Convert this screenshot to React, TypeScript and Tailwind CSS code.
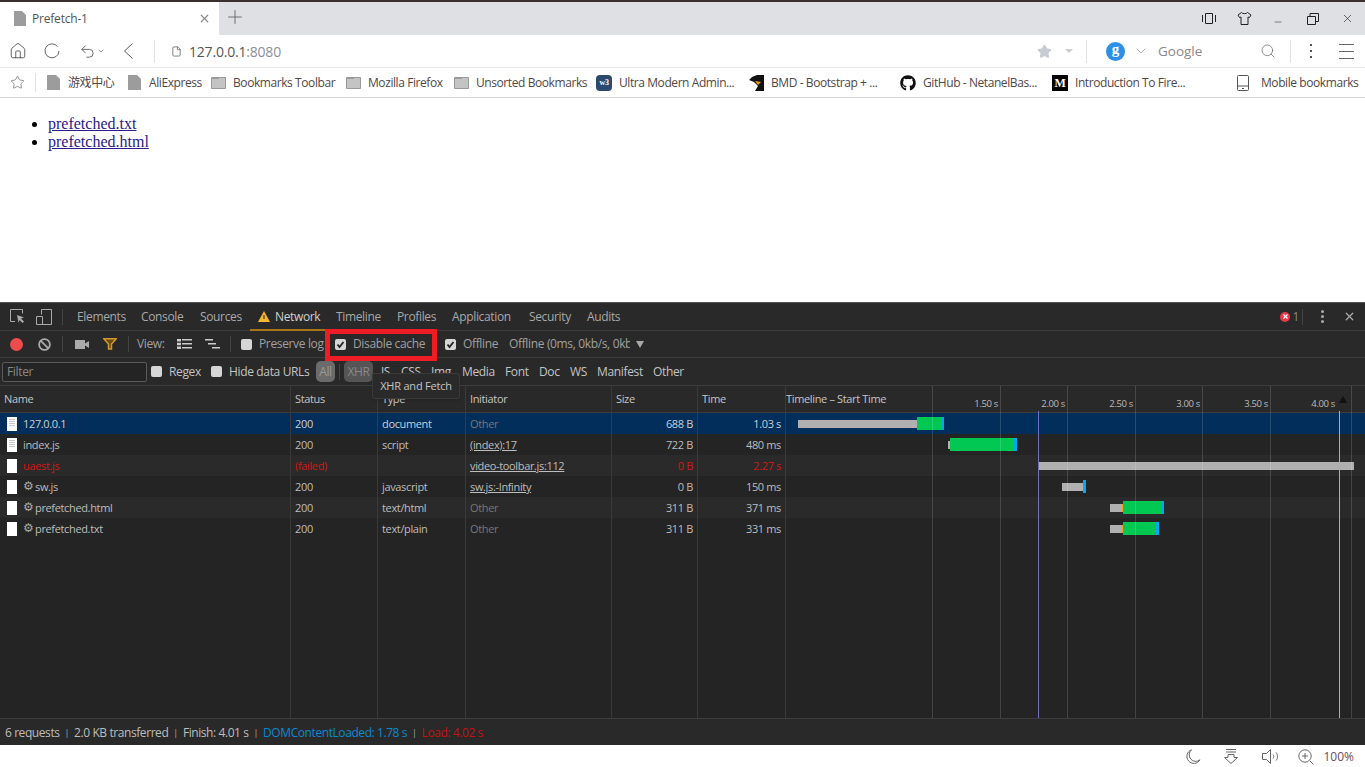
import { ChevronDown, File, Home, Minus, Plus, Search, Star, Undo2, X } from "lucide-react";
import { FaGithub } from "react-icons/fa";

const ui = "font-['Open_Sans','Noto_Sans',sans-serif]";

type Bookmark = { label: string; icon: "doc" | "folder" | "w3" | "bmd" | "gh" | "m"; w: string; tw: string };

const bookmarks: Bookmark[] = [
  { label: "游戏中心", icon: "doc", w: "w-[81px]", tw: "w-[60px]" },
  { label: "AliExpress", icon: "doc", w: "w-[83px]", tw: "w-[62px]" },
  { label: "Bookmarks Toolbar", icon: "folder", w: "w-[135px]", tw: "w-[113px]" },
  { label: "Mozilla Firefox", icon: "folder", w: "w-[108px]", tw: "w-[86px]" },
  { label: "Unsorted Bookmarks", icon: "folder", w: "w-[142px]", tw: "w-[120px]" },
  { label: "Ultra Modern Admin...", icon: "w3", w: "w-[152px]", tw: "w-[129px]" },
  { label: "BMD - Bootstrap + ...", icon: "bmd", w: "w-[152px]", tw: "w-[129px]" },
  { label: "GitHub - NetanelBas...", icon: "gh", w: "w-[152px]", tw: "w-[129px]" },
  { label: "Introduction To Fire...", icon: "m", w: "w-[185px]", tw: "w-[129px]" },
];

function BookmarkIcon({ icon }: { icon: Bookmark["icon"] }) {
  if (icon === "doc")
    return (
      <svg className="mr-px" width="13" height="15" viewBox="0 0 13 15">
        <path d="M0 0h9l4 4v11H0z" fill="#9c9c9c" />
      </svg>
    );
  if (icon === "folder")
    return (
      <svg width="15" height="13" viewBox="0 0 15 13">
        <path d="M.5 1.5h14v11H.5z" fill="#c4c4c4" stroke="#9a9a9a" />
        <path d="M1 1h7v2H1z" fill="#9a9a9a" />
      </svg>
    );
  if (icon === "w3")
    return <div className="w-4 h-4 bg-[#2c4a6e] rounded-sm flex items-center justify-center text-white text-[8px] font-bold font-['Liberation_Serif',serif]">w3</div>;
  if (icon === "bmd")
    return (
      <svg width="16" height="16" viewBox="0 0 16 16">
        <path d="M9 0h7v16H7l3-5-4-4-5-2 3-3z" fill="#111" />
        <path d="M7 6l6 1-3 3z" fill="#f59e0b" />
      </svg>
    );
  if (icon === "gh") return <FaGithub size={16} color="#111" />;
  return <div className="w-4 h-4 bg-black text-white text-[12px] leading-4 text-center font-bold font-['Liberation_Serif',serif]">M</div>;
}

function BrowserChrome() {
  return (
    <>
      <div className="h-[2px] bg-[#3a3030] shrink-0" />
      <div className={`h-[33px] bg-[#dfe0e4] flex shrink-0 ${ui}`}>
        <div className="w-[219px] bg-white flex items-center pl-[14px] pr-[8px]">
          <svg width="12" height="15" viewBox="0 0 12 15">
            <path d="M0 0h8l4 4v11H0z" fill="#9c9c9c" />
          </svg>
          <span className="ml-[6px] text-[12px] tracking-[-0.2px] text-[#555] flex-1">Prefetch-1</span>
          <X size={13} color="#8c8c8c" strokeWidth={2.2} />
        </div>
        <div className="ml-[5px] mb-[3px] flex items-center">
          <Plus size={22} color="#666" strokeWidth={1} />
        </div>
        <div className="ml-auto flex items-center w-[165px] text-[#222]">
          <svg className="ml-[2px]" width="14" height="13" viewBox="0 0 14 13" fill="none" stroke="#222">
            <path d="M3.5 1.5h7v10h-7zM.5 3v7M13.5 3v7" />
          </svg>
          <svg className="ml-[21px]" width="15" height="13" viewBox="0 0 15 13" fill="none" stroke="#222">
            <path d="M4.5.5L1 3l1.500 2.500 1.500-.5v7.500h7V5l1.500.5L14 3 10.500.5c-.5 1.500-5.500 1.500-6 0z" />
          </svg>
          <Minus className="ml-[21px] mt-[6px]" size={10} strokeWidth={1.3} />
          <svg className="ml-[24px]" width="12" height="12" viewBox="0 0 12 12" fill="none" stroke="#222">
            <path d="M.5 3.500h8v8h-8zM3 3.500v-3h8.500v8H8.500" />
          </svg>
          <X className="ml-[22px]" size={13} strokeWidth={1.2} />
        </div>
      </div>

      <div className={`h-[33px] bg-white border-b border-[#e6e6e6] flex items-center shrink-0 ${ui}`}>
        <Home className="ml-[9px]" size={18} color="#444" strokeWidth={1.1} />
        <svg className="ml-[17px]" width="16" height="16" viewBox="0 0 16 16" fill="none" stroke="#666">
          <path d="M13.500 3.500A7 7 0 1 0 15 8" />
        </svg>
        <Undo2 className="ml-[19px]" size={17} color="#444" strokeWidth={1.1} />
        <ChevronDown className="ml-[1px]" size={8} color="#555" />
        <svg className="ml-[18px]" width="11" height="16" viewBox="0 0 11 16" fill="none" stroke="#555">
          <path d="M9.500.5L1.500 8l8 7.500" />
        </svg>
        <div className="ml-[20px] w-px h-[23px] bg-[#e3e3e3]" />
        <File className="ml-[16px]" size={11} color="#777" />
        <span className="ml-[7px] text-[14px] tracking-[-0.2px] text-[#555]">
          127.0.0.1<span className="text-[#8a9096]">:8080</span>
        </span>
        <Star className="ml-[756px]" size={15} fill="#c8ccd2" color="#c8ccd2" />
        <div className="ml-[13px] w-0 h-0 border-x-[4px] border-x-transparent border-t-[4px] border-t-[#ccc]" />
        <div className="ml-[13px] w-px h-[23px] bg-[#e3e3e3]" />
        <div className="ml-[19px] w-[19px] h-[19px] rounded-full bg-[#2d8fe8] text-white text-[15px] leading-[15px] text-center font-bold font-['Liberation_Serif',serif]">g</div>
        <ChevronDown className="ml-[8px]" size={16} color="#999" strokeWidth={1.2} />
        <span className="ml-[9px] text-[13.500px] text-[#888]">Google</span>
        <Search className="ml-[58px]" size={16} color="#666" strokeWidth={1.1} />
        <div className="ml-[14px] w-px h-[23px] bg-[#e3e3e3]" />
        <div className="ml-[19px] flex flex-col gap-[4px]">
          <div className="w-[2px] h-[2px] bg-[#555]" />
          <div className="w-[2px] h-[2px] bg-[#555]" />
          <div className="w-[2px] h-[2px] bg-[#555]" />
        </div>
        <div className="ml-[27px] w-[15px] flex flex-col gap-[6px]">
          <div className="h-px bg-[#666]" />
          <div className="h-px bg-[#666]" />
          <div className="h-px bg-[#666]" />
        </div>
      </div>

      <div className={`h-[30px] bg-white border-b border-[#d2d2d2] flex items-center shrink-0 text-[12px] tracking-[-0.42px] text-[#504747] ${ui}`}>
        <Star className="ml-[10px]" size={15} color="#555" strokeWidth={1} />
        <div className="ml-[10px] mr-[11px] w-px h-[19px] bg-[#e3e3e3]" />
        {bookmarks.map((b) => (
          <div key={b.label} className={`flex items-center shrink-0 gap-[7px] ${b.w}`}>
            <div className="shrink-0 flex">
              <BookmarkIcon icon={b.icon} />
            </div>
            <span className={`whitespace-nowrap font-["Open_Sans","Noto_Sans_CJK_SC",sans-serif] ${b.tw}`}>{b.label}</span>
          </div>
        ))}
        <svg width="12" height="16" viewBox="0 0 12 16" fill="none" stroke="#555">
          <rect x=".5" y=".5" width="11" height="15" rx="1" />
          <path d="M.5 11h11M5 13.500h2" />
        </svg>
        <span className="ml-[12px] whitespace-nowrap">Mobile bookmarks</span>
      </div>
    </>
  );
}

function PageContent() {
  return (
    <div className="h-[204px] bg-white shrink-0 font-['Liberation_Serif',serif] text-[16px] leading-[18px] text-black pt-[17px]">
      <ul className="list-disc pl-[48px]">
        <li>
          <a className="underline text-[#2a1a8a]">prefetched.txt</a>
        </li>
        <li>
          <a className="underline text-[#2a1a8a]">prefetched.html</a>
        </li>
      </ul>
    </div>
  );
}

function Check({ checked, className }: { checked?: boolean; className?: string }) {
  return (
    <div className={`w-[11px] h-[11px] rounded-[2px] bg-[#d6d6d6] flex items-center justify-center shrink-0 ${className ?? ""}`}>
      {checked && (
        <svg width="9" height="9" viewBox="0 0 9 9" fill="none" stroke="#222" strokeWidth="1.800">
          <path d="M1.500 4.500L3.500 7l4-5" />
        </svg>
      )}
    </div>
  );
}

const Sep = ({ className }: { className?: string }) => <div className={`w-px h-[16px] bg-[#444] shrink-0 ${className ?? ""}`} />;

const devTabs = [
  { label: "Elements", w: "w-[64px]" },
  { label: "Console", w: "w-[59px]" },
  { label: "Sources", w: "w-[50px]" },
];
const devTabsRight = [
  { label: "Timeline", w: "w-[61px]" },
  { label: "Profiles", w: "w-[55px]" },
  { label: "Application", w: "w-[77px]" },
  { label: "Security", w: "w-[58px]" },
  { label: "Audits", w: "w-[50px]" },
];

function DevTabs() {
  return (
    <div className="h-[28px] bg-[#292929] border-b border-[#3d3d3d] flex items-center shrink-0 text-[#a8a8a8]">
      <svg className="ml-[10px]" width="15" height="15" viewBox="0 0 15 15" fill="none" stroke="#aaa">
        <path d="M5 12.500H.5V.5h12v4" />
        <path d="M7 6l7 2.500-3 1 3 3-1.500 1.500-3-3-1 3z" fill="#aaa" stroke="none" />
      </svg>
      <svg className="ml-[11px]" width="16" height="16" viewBox="0 0 16 16" fill="none" stroke="#aaa">
        <path d="M5.500 5.500v-5h10v15h-10M.5 7.500h6v8h-6z" />
      </svg>
      <Sep className="ml-[10px] mr-[14px]" />
      {devTabs.map((t) => (
        <span key={t.label} className={`shrink-0 ${t.w}`}>
          {t.label}
        </span>
      ))}
      <div className="relative h-full w-[78px] shrink-0 flex items-center pl-[8px] gap-[5px] text-[#d0d0d0]">
        <svg width="12" height="11" viewBox="0 0 12 11">
          <path d="M6 0l6 11H0z" fill="#f2b92e" />
          <path d="M5.500 4h1v4h-1z" fill="#222" />
        </svg>
        <span>Network</span>
        <div className="absolute left-0 right-0 -bottom-px h-[2px] bg-[#a8741a]" />
      </div>
      <div className="w-[8px] shrink-0" />
      {devTabsRight.map((t) => (
        <span key={t.label} className={`shrink-0 ${t.w}`}>
          {t.label}
        </span>
      ))}
      <div className="ml-auto flex items-center">
        <div className="w-[10px] h-[10px] rounded-full bg-[#e8394a] flex items-center justify-center">
          <X size={7} color="#fff" strokeWidth={4} />
        </div>
        <span className="ml-[2px] text-[#888]">1</span>
        <div className="ml-[3px] w-px h-[16px] bg-[#444]" />
        <div className="ml-[18px] flex flex-col gap-[2px]">
          <div className="w-[3px] h-[3px] rounded-full bg-[#aaa]" />
          <div className="w-[3px] h-[3px] rounded-full bg-[#aaa]" />
          <div className="w-[3px] h-[3px] rounded-full bg-[#aaa]" />
        </div>
        <X className="ml-[19px] mr-[9px]" size={13} color="#aaa" strokeWidth={2.4} />
      </div>
    </div>
  );
}

function NetToolbar() {
  return (
    <div className="h-[27px] bg-[#292929] border-b border-[#3d3d3d] flex items-center shrink-0 text-[#a0a0a0]">
      <div className="ml-[10px] w-[13px] h-[13px] rounded-full bg-[#f04b4b]" />
      <svg className="ml-[15px]" width="13" height="13" viewBox="0 0 13 13" fill="none" stroke="#aaa" strokeWidth="1.800">
        <circle cx="6.500" cy="6.500" r="5.400" />
        <path d="M2.800 2.800l7.400 7.400" />
      </svg>
      <Sep className="ml-[11px]" />
      <svg className="ml-[12px]" width="14" height="9" viewBox="0 0 14 9">
        <path d="M0 0h10v9H0zM10 3.500L14 1v7l-4-2.500z" fill="#aaa" />
      </svg>
      <svg className="ml-[14px]" width="14" height="12" viewBox="0 0 14 12" fill="#6b4c14" stroke="#d1982c" strokeWidth="1.500">
        <path d="M.8.800h12.400L8.500 6v5H5.500V6z" />
      </svg>
      <Sep className="ml-[11px]" />
      <span className="ml-[8px] w-[40px]">View:</span>
      <svg width="15" height="10" viewBox="0 0 15 10" fill="#ccc">
        <path d="M0 0h4v2.500H0zM0 3.700h4v2.500H0zM0 7.400h4v2.500H0zM5 0h10v1.500H5zM5 4h10v1.500H5zM5 8h10v1.500H5z" />
      </svg>
      <svg className="ml-[13px]" width="15" height="10" viewBox="0 0 15 10" fill="#ccc">
        <path d="M0 0h8v1.500H0zM3 4h8v1.500H3zM7 8h8v1.500H7z" />
      </svg>
      <Sep className="ml-[10px]" />
      <Check className="ml-[10px]" />
      <span className="ml-[7px] w-[76px] whitespace-nowrap">Preserve log</span>
      <Check checked />
      <span className="ml-[7px] w-[92px] whitespace-nowrap">Disable cache</span>
      <Check checked />
      <span className="ml-[7px] w-[46px] whitespace-nowrap">Offline</span>
      <span className="w-[121px] overflow-hidden whitespace-nowrap">Offline (0ms, 0kb/s, 0kb/s)</span>
      <div className="ml-[6px] w-0 h-0 border-x-[4px] border-x-transparent border-t-[7px] border-t-[#aaa]" />
    </div>
  );
}

const filterTypes = [
  { label: "JS", w: "w-[20px]" },
  { label: "CSS", w: "w-[30px]" },
  { label: "Img", w: "w-[31px]" },
  { label: "Media", w: "w-[43px]" },
  { label: "Font", w: "w-[34px]" },
  { label: "Doc", w: "w-[31px]" },
  { label: "WS", w: "w-[27px]" },
  { label: "Manifest", w: "w-[56px]" },
  { label: "Other", w: "w-[40px]" },
];

function FilterBar() {
  return (
    <div className="h-[28px] bg-[#292929] border-b border-[#3d3d3d] flex items-center shrink-0 text-[#c4c4c4]">
      <div className="ml-[2px] w-[145px] h-[20px] rounded-[2px] border border-[#5a5a5a] bg-[#242424] pl-[4px] leading-[18px] text-[#888] shrink-0">Filter</div>
      <Check className="ml-[4px]" />
      <span className="ml-[7px] w-[42px]">Regex</span>
      <Check />
      <span className="ml-[7px] w-[87px] whitespace-nowrap">Hide data URLs</span>
      <div className="w-[19px] h-[21px] rounded-[5px] bg-[#6b6b6b] text-[#999] text-center leading-[21px] shrink-0">All</div>
      <div className="ml-[4px] mr-[4px] w-px h-[16px] bg-[#444]" />
      <div className="w-[29px] h-[21px] rounded-[5px] bg-[#555] text-[#888] text-center leading-[21px] shrink-0">XHR</div>
      <div className="w-[8px] shrink-0" />
      {filterTypes.map((t) => (
        <span key={t.label} className={`shrink-0 ${t.w}`}>
          {t.label}
        </span>
      ))}
    </div>
  );
}

type Seg = { from: number; to: number; color: string; tall?: boolean };
type Req = {
  name: string;
  gear?: boolean;
  lines?: boolean;
  status: string;
  type: string;
  initiator: string;
  link?: boolean;
  size: string;
  time: string;
  failed?: boolean;
  segs: Seg[];
};

const GRAY = "#b0b0b0";
const GREEN = "#00c853";
const BLUE = "#03a9f4";
const ORANGE = "#f5a11e";

const requests: Req[] = [
  { name: "127.0.0.1", lines: true, status: "200", type: "document", initiator: "Other", size: "688 B", time: "1.03 s", segs: [{ from: 798, to: 917, color: GRAY }, { from: 917, to: 941, color: GREEN, tall: true }, { from: 941, to: 944, color: BLUE, tall: true }] },
  { name: "index.js", lines: true, status: "200", type: "script", initiator: "(index):17", link: true, size: "722 B", time: "480 ms", segs: [{ from: 948, to: 950, color: GRAY }, { from: 950, to: 1014, color: GREEN, tall: true }, { from: 1014, to: 1017, color: BLUE, tall: true }] },
  { name: "uaest.js", status: "(failed)", type: "", initiator: "video-toolbar.js:112", link: true, size: "0 B", time: "2.27 s", failed: true, segs: [{ from: 1039, to: 1354, color: GRAY }] },
  { name: "sw.js", gear: true, status: "200", type: "javascript", initiator: "sw.js:-Infinity", link: true, size: "0 B", time: "150 ms", segs: [{ from: 1062, to: 1083, color: GRAY }, { from: 1083, to: 1086, color: BLUE, tall: true }] },
  { name: "prefetched.html", gear: true, status: "200", type: "text/html", initiator: "Other", size: "311 B", time: "371 ms", segs: [{ from: 1110, to: 1122, color: GRAY }, { from: 1122, to: 1123, color: ORANGE }, { from: 1123, to: 1161, color: GREEN, tall: true }, { from: 1161, to: 1164, color: BLUE, tall: true }] },
  { name: "prefetched.txt", gear: true, status: "200", type: "text/plain", initiator: "Other", size: "311 B", time: "331 ms", segs: [{ from: 1110, to: 1121, color: GRAY }, { from: 1121, to: 1123, color: ORANGE }, { from: 1123, to: 1156, color: GREEN, tall: true }, { from: 1156, to: 1159, color: BLUE, tall: true }] },
];

const gridLines = [932, 1000, 1067, 1135, 1202, 1270, 1351];
const scale = [
  { label: "1.50 s", right: 998 },
  { label: "2.00 s", right: 1065 },
  { label: "2.50 s", right: 1133 },
  { label: "3.00 s", right: 1200 },
  { label: "3.50 s", right: 1268 },
  { label: "4.00 s", right: 1335 },
];

const c1 = "w-[291px] shrink-0 border-r border-[#3a3a3a]";
const c2 = "w-[87px] shrink-0 border-r border-[#3a3a3a] pl-[4px]";
const c3 = "w-[88px] shrink-0 border-r border-[#3a3a3a] pl-[4px]";
const c4 = "w-[146px] shrink-0 border-r border-[#3a3a3a] pl-[4px]";
const c5 = "w-[86px] shrink-0 border-r border-[#3a3a3a] px-[4px]";
const c6 = "w-[88px] shrink-0 border-r border-[#3a3a3a] px-[4px]";

function HeaderRow() {
  return (
    <div className="h-[27px] bg-[#292929] border-b border-[#3d3d3d] flex shrink-0 text-[#c4c4c4] text-[11px] leading-[25px] relative">
      <div className={`${c1} pl-[4px]`}>Name</div>
      <div className={c2}>Status</div>
      <div className={c3}>Type</div>
      <div className={c4}>Initiator</div>
      <div className={c5}>Size</div>
      <div className={c6}>Time</div>
      <div className="flex-1">Timeline – Start Time</div>
      {scale.map((s) => (
        <span key={s.label} className="absolute top-[5px] text-[9.500px] text-[#bbb] -translate-x-full" style={{ left: s.right }}>
          {s.label}
        </span>
      ))}
      <div className="absolute left-[1339px] top-[10px] w-0 h-0 border-x-[4px] border-x-transparent border-b-[7px] border-b-[#111]" />
    </div>
  );
}

function RequestRow({ r, index }: { r: Req; index: number }) {
  const bg = index === 0 ? "bg-[#012e5a]" : index % 2 === 0 ? "bg-[#2a2a2a]" : "bg-[#242424]";
  const main = r.failed ? "text-[#d01818]" : index === 0 ? "text-[#c8d0d8]" : "text-[#bdbdbd]";
  return (
    <div className={`h-[21px] flex shrink-0 text-[11px] leading-[21px] ${bg} ${main}`}>
      <div className={`${c1} flex items-center`}>
        <div className="ml-[7px] w-[10px] h-[14px] bg-white flex flex-col gap-px p-[2px] shrink-0">
          {r.lines && [0, 1, 2, 3].map((i) => <div key={i} className="h-px bg-[#c8c8c8]" />)}
        </div>
        {r.gear ? <span className="ml-[6px] w-[12px] text-[12px] text-[#aaa] font-['DejaVu_Sans',sans-serif]">⚙</span> : <div className="w-[6px]" />}
        <span>{r.name}</span>
      </div>
      <div className={c2}>{r.status}</div>
      <div className={c3}>{r.type}</div>
      <div className={`${c4} ${r.failed ? "text-[#bdbdbd]" : ""} ${r.link ? "underline" : "text-[#777]"}`}>{r.initiator}</div>
      <div className={`${c5} text-right`}>{r.size}</div>
      <div className={`${c6} text-right`}>{r.time}</div>
      <div className="flex-1 relative">
        {r.segs.map((s) => (
          <div
            key={s.from}
            className={`absolute ${s.tall ? "top-[4px] h-[13px]" : "top-[7px] h-[8px]"}`}
            style={{ left: s.from - 786, width: s.to - s.from, backgroundColor: s.color }}
          />
        ))}
      </div>
    </div>
  );
}

function NetTable() {
  return (
    <div className="flex-1 flex flex-col relative min-h-0">
      {requests.map((r, i) => (
        <RequestRow key={r.name} r={r} index={i} />
      ))}
      <div className="flex-1 flex bg-[#242424]">
        <div className={c1} />
        <div className={c2} />
        <div className={c3} />
        <div className={c4} />
        <div className={c5} />
        <div className={c6} />
      </div>
      {gridLines.map((x) => (
        <div key={x} className="absolute -top-[27px] bottom-0 w-px bg-white/15" style={{ left: x }} />
      ))}
      <div className="absolute -top-[2px] bottom-0 left-[1038px] w-px bg-[#6f6fc8]" />
      <div className="absolute -top-[2px] bottom-0 left-[1339px] w-px bg-[#d89a9a]" />
    </div>
  );
}

function Footer() {
  const dot = <span className="mx-[5px] text-[#aaa] text-[9px]">|</span>;
  return (
    <div className="h-[27px] bg-[#292929] border-t border-[#3d3d3d] flex items-center shrink-0 pl-[5px] pt-px tracking-[-0.42px] text-[#bdbdbd] whitespace-nowrap">
      <span>6 requests</span>
      {dot}
      <span>2.0 KB transferred</span>
      {dot}
      <span>Finish: 4.01 s</span>
      {dot}
      <span className="text-[#0a8ad0]">DOMContentLoaded: 1.78 s</span>
      {dot}
      <span className="text-[#c81010]">Load: 4.02 s</span>
    </div>
  );
}

function StatusBar() {
  return (
    <div className={`h-[22px] bg-white flex items-center justify-end shrink-0 pr-[11px] pt-px ${ui}`}>
      <svg width="15" height="15" viewBox="0 0 15 15" fill="none" stroke="#666">
        <path d="M5.500.8a7 7 0 1 0 8.500 10 6.500 6.500 0 0 1-8.500-10z" />
      </svg>
      <svg className="ml-[23px]" width="14" height="15" viewBox="0 0 14 15" fill="none" stroke="#666">
        <path d="M2 .5h10M2 3h10M4 5.500h6v3h3.500L7 14.500.5 8.500H4z" />
      </svg>
      <svg className="ml-[24px]" width="19" height="15" viewBox="0 0 19 15" fill="none" stroke="#666">
        <path d="M.5 4.500h4l4-4v14l-4-4h-4zM11 5.500c1 1 1 3 0 4M14 3.500c2 2 2 6 0 8" />
      </svg>
      <svg className="ml-[17px]" width="16" height="16" viewBox="0 0 16 16" fill="none" stroke="#666">
        <circle cx="7" cy="7" r="6.200" />
        <path d="M7 4v6M4 7h6M12 12l3.500 3.500" />
      </svg>
      <span className="ml-[9px] text-[12px] text-[#6b4a60]">100%</span>
    </div>
  );
}

export default function App() {
  return (
    <div className="h-screen w-full overflow-hidden flex flex-col bg-white relative">
      <BrowserChrome />
      <PageContent />
      <div className={`flex-1 flex flex-col border-t border-[#555] bg-[#242424] text-[12px] tracking-[-0.35px] min-h-0 ${ui}`}>
        <DevTabs />
        <NetToolbar />
        <FilterBar />
        <HeaderRow />
        <NetTable />
        <Footer />
      </div>
      <StatusBar />
      {/* red highlight drawn over the toolbar */}
      <div className="absolute left-[325px] top-[329px] w-[112px] h-[32px] border-[5px] border-[#ee1c25]" />
      <div className={`absolute left-[372px] top-[373px] w-[88px] h-[26px] bg-[#2a2a2a] border border-[#3a3a3a] rounded-[2px] text-[11px] tracking-[-0.2px] leading-[24px] text-center text-[#c4c4c4] shadow ${ui}`}>XHR and Fetch</div>
    </div>
  );
}
